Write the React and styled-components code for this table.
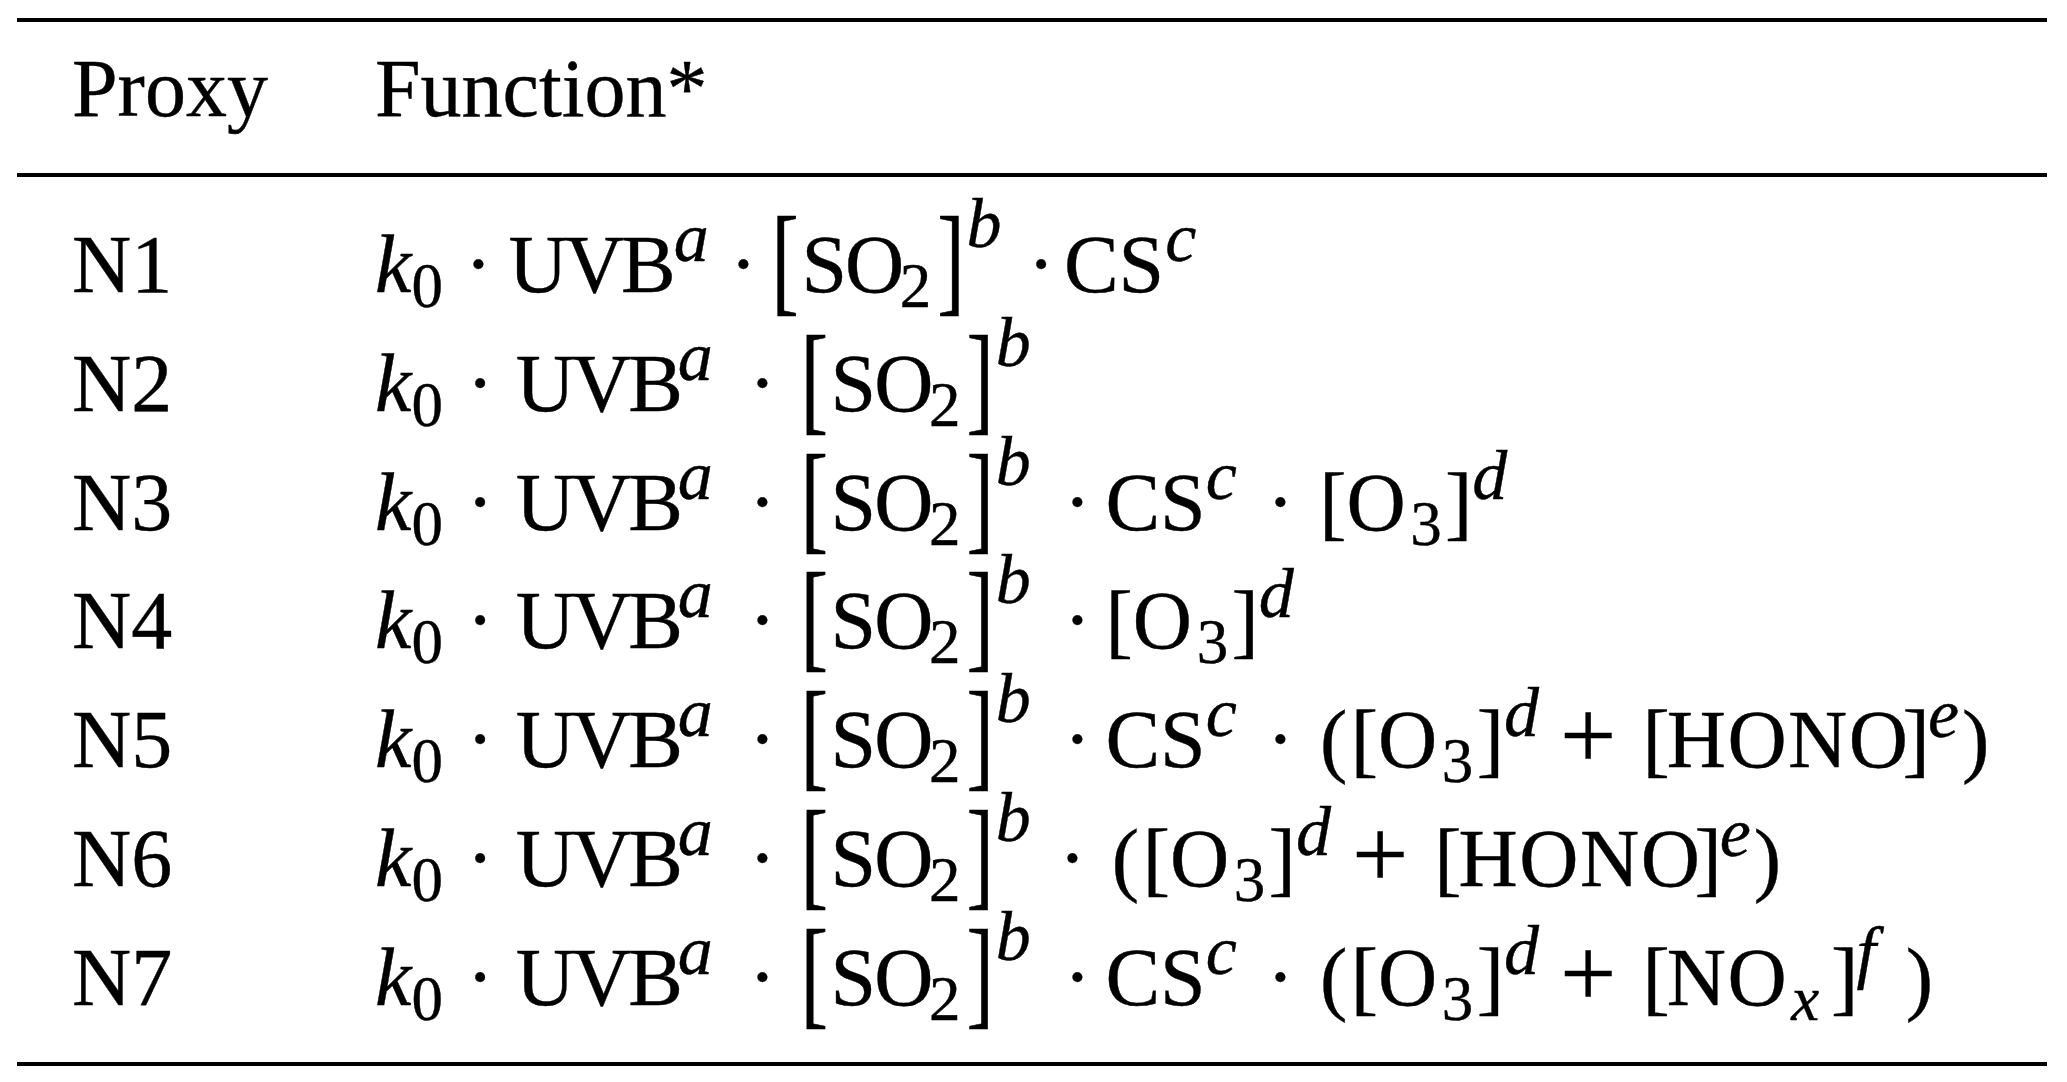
import React from "react";
import styled, { createGlobalStyle } from "styled-components";

const GlobalStyle = createGlobalStyle`
  html, body {
    margin: 0;
    padding: 0;
    background: #fff;
  }
  body {
    font-family: "Liberation Serif", "Times New Roman", serif;
    color: #000;
  }
`;

const Page = styled.div`
  padding: 18px 0 0 17px;
`;

const Table = styled.div`
  width: 2030px;
  font-size: 82px;
  -webkit-text-stroke: 0.4px #000;
  border-top: 4px solid #000;
  border-bottom: 4px solid #000;
`;

const HeadRow = styled.div`
  display: grid;
  grid-template-columns: 303px auto;
  padding: 17px 0 34px 55px;
  line-height: 100px;
  border-bottom: 4px solid #000;
`;

const Body = styled.div`
  padding: 29px 0 24.5px;
`;

const Row = styled.div`
  display: grid;
  grid-template-columns: 303px auto;
  padding-left: 55px;
  height: 118.8px;
  line-height: 118.8px;
`;

const Cell = styled.div`
  white-space: nowrap;
`;

/* math pieces, each with its own left gap */
const It = styled.span`
  font-style: italic;
  margin-left: ${({ $m }) => $m || 0}px;
`;

const Rm = styled.span`
  margin-left: ${({ $m }) => $m || 0}px;
  letter-spacing: ${({ $ls }) => $ls || 0}px;
`;

const Sub = styled.span`
  font-size: 63px;
  line-height: 0;
  vertical-align: -15px;
  font-style: ${({ $it }) => ($it ? "italic" : "normal")};
  margin-left: ${({ $m }) => $m || 0}px;
`;

const Sup = styled.span`
  font-size: 70px;
  line-height: 0;
  font-style: italic;
  vertical-align: ${({ $up }) => $up ?? 31}px;
  margin-left: ${({ $m }) => $m || 0}px;
`;

const Dot = styled.span`
  margin-left: ${({ $m }) => $m || 0}px;
  &::before {
    content: "\\00B7";
  }
`;

const Plus = styled.span`
  font-size: 100px;
  line-height: 0;
  vertical-align: -2px;
  margin-left: ${({ $m }) => $m || 0}px;
`;

const Fence = styled.span`
  display: inline-block;
  line-height: 1;
  transform: translateY(-1px) scaleY(1.46);
  transform-origin: 50% 48px;
  margin-left: ${({ $m }) => $m || 0}px;
`;

const tight = { dot1: 21.8, uvb: 16.6, a: 1, dot2: 21, open: 14.5 };
const wide = { dot1: 23.5, uvb: 22, a: -2, dot2: 36, open: 24.5 };

const Prefix = ({ s }) => (
  <>
    <It>k</It>
    <Sub>0</Sub>
    <Dot $m={s.dot1} />
    <Rm $m={s.uvb} $ls={-3}>UVB</Rm>
    <Sup $m={s.a}>a</Sup>
    <Dot $m={s.dot2} />
    <Fence $m={s.open}>[</Fence>
    <Rm $m={2.6} $ls={-2}>SO</Rm>
    <Sub $m={-2.5}>2</Sub>
    <Fence $m={6}>]</Fence>
    <Sup $m={2} $up={45}>b</Sup>
  </>
);

const Ozone = ({ m }) => (
  <>
    <Rm $m={m}>[</Rm>
    <Rm>O</Rm>
    <Sub $m={4.6}>3</Sub>
    <Rm $m={3.3}>]</Rm>
    <Sup>d</Sup>
  </>
);

const Cs = ({ dot, m, after }) => (
  <>
    <Dot $m={dot} />
    <Rm $m={m}>CS</Rm>
    <Sup $m={after}>c</Sup>
  </>
);

const Sum = ({ open, children }) => (
  <>
    <Rm $m={open}>(</Rm>
    <Ozone m={3.5} />
    <Plus $m={21}>+</Plus>
    <Rm $m={26}>[</Rm>
    {children}
  </>
);

const Hono = () => (
  <>
    <Rm $m={-3} $ls={1.5}>HONO</Rm>
    <Rm $m={-7}>]</Rm>
    <Sup $m={-2} $up={30}>e</Sup>
    <Rm $m={3}>)</Rm>
  </>
);

const rows = [
  {
    id: "N1",
    fn: (
      <>
        <Prefix s={tight} />
        <Cs dot={26} m={9} after={1} />
      </>
    ),
  },
  {
    id: "N2",
    fn: <Prefix s={wide} />,
  },
  {
    id: "N3",
    fn: (
      <>
        <Prefix s={wide} />
        <Cs dot={33} m={14.4} after={0} />
        <Dot $m={30} />
        <Ozone m={25} />
      </>
    ),
  },
  {
    id: "N4",
    fn: (
      <>
        <Prefix s={wide} />
        <Dot $m={33} />
        <Ozone m={14.5} />
      </>
    ),
  },
  {
    id: "N5",
    fn: (
      <>
        <Prefix s={wide} />
        <Cs dot={33} m={14.4} after={0} />
        <Dot $m={30} />
        <Sum open={25.8}>
          <Hono />
        </Sum>
      </>
    ),
  },
  {
    id: "N6",
    fn: (
      <>
        <Prefix s={wide} />
        <Dot $m={28} />
        <Sum open={25.8}>
          <Hono />
        </Sum>
      </>
    ),
  },
  {
    id: "N7",
    fn: (
      <>
        <Prefix s={wide} />
        <Cs dot={33} m={14.4} after={0} />
        <Dot $m={30} />
        <Sum open={25.8}>
          <Rm $m={-3} $ls={1.5}>NO</Rm>
          <Sub $it $m={3}>x</Sub>
          <Rm $m={12}>]</Rm>
          <Sup $m={-2} $up={30}>f</Sup>
          <Rm $m={30}>)</Rm>
        </Sum>
      </>
    ),
  },
];

export default function App() {
  return (
    <>
      <GlobalStyle />
      <Page>
        <Table>
          <HeadRow>
            <Cell>Proxy</Cell>
            <Cell>Function*</Cell>
          </HeadRow>
          <Body>
            {rows.map((row) => (
              <Row key={row.id}>
                <Cell>{row.id}</Cell>
                <Cell>{row.fn}</Cell>
              </Row>
            ))}
          </Body>
        </Table>
      </Page>
    </>
  );
}
